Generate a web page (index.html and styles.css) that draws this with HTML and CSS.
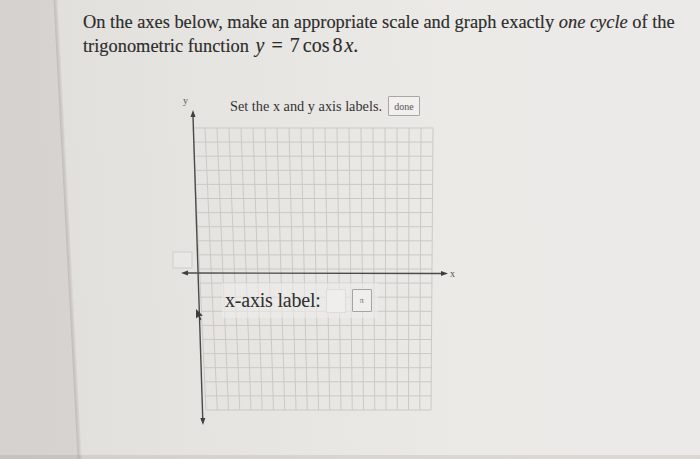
FILE: index.html
```html
<!DOCTYPE html>
<html lang="en">
<head>
<meta charset="utf-8">
<title>Graph one cycle</title>
<link rel="stylesheet" href="styles.css">
</head>
<body>
<main class="page">
  <p class="prompt">On the axes below, make an appropriate scale and graph exactly <em>one cycle</em> of the<br>trigonometric function <span class="math"><i>y</i><span class="op">=</span>7<span class="fn">cos</span>8<i>x</i>.</span></p>

  <div class="widget">
    <svg class="graph" width="300" height="340" viewBox="165 92 300 340" xmlns="http://www.w3.org/2000/svg">
      <g class="grid">
        <line x1="193" y1="128" x2="206" y2="410"/>
        <line x1="205" y1="128" x2="217.25" y2="410"/>
        <line x1="217" y1="128" x2="228.5" y2="410"/>
        <line x1="229" y1="128" x2="239.75" y2="410"/>
        <line x1="241" y1="128" x2="251" y2="410"/>
        <line x1="253" y1="128" x2="262.25" y2="410"/>
        <line x1="265" y1="128" x2="273.5" y2="410"/>
        <line x1="277" y1="128" x2="284.75" y2="410"/>
        <line x1="289" y1="128" x2="296" y2="410"/>
        <line x1="301" y1="128" x2="307.25" y2="410"/>
        <line x1="313" y1="128" x2="318.5" y2="410"/>
        <line x1="325" y1="128" x2="329.75" y2="410"/>
        <line x1="337" y1="128" x2="341" y2="410"/>
        <line x1="349" y1="128" x2="352.25" y2="410"/>
        <line x1="361" y1="128" x2="363.5" y2="410"/>
        <line x1="373" y1="128" x2="374.75" y2="410"/>
        <line x1="385" y1="128" x2="386" y2="410"/>
        <line x1="397" y1="128" x2="397.25" y2="410"/>
        <line x1="409" y1="128" x2="408.5" y2="410"/>
        <line x1="421" y1="128" x2="419.75" y2="410"/>
        <line x1="433" y1="128" x2="431" y2="410"/>
        <line x1="193" y1="128" x2="433" y2="128"/>
        <line x1="193.65" y1="142.1" x2="432.9" y2="142.1"/>
        <line x1="194.3" y1="156.2" x2="432.8" y2="156.2"/>
        <line x1="194.95" y1="170.3" x2="432.7" y2="170.3"/>
        <line x1="195.6" y1="184.4" x2="432.6" y2="184.4"/>
        <line x1="196.25" y1="198.5" x2="432.5" y2="198.5"/>
        <line x1="196.9" y1="212.6" x2="432.4" y2="212.6"/>
        <line x1="197.55" y1="226.7" x2="432.3" y2="226.7"/>
        <line x1="198.2" y1="240.8" x2="432.2" y2="240.8"/>
        <line x1="198.85" y1="254.9" x2="432.1" y2="254.9"/>
        <line x1="199.5" y1="269" x2="432" y2="269"/>
        <line x1="200.15" y1="283.1" x2="431.9" y2="283.1"/>
        <line x1="200.8" y1="297.2" x2="431.8" y2="297.2"/>
        <line x1="201.45" y1="311.3" x2="431.7" y2="311.3"/>
        <line x1="202.1" y1="325.4" x2="431.6" y2="325.4"/>
        <line x1="202.75" y1="339.5" x2="431.5" y2="339.5"/>
        <line x1="203.4" y1="353.6" x2="431.4" y2="353.6"/>
        <line x1="204.05" y1="367.7" x2="431.3" y2="367.7"/>
        <line x1="204.7" y1="381.8" x2="431.2" y2="381.8"/>
        <line x1="205.35" y1="395.9" x2="431.1" y2="395.9"/>
        <line x1="206" y1="410" x2="431" y2="410"/>
      </g>
      <rect class="ybox" x="173" y="252" width="19" height="16"/>
      <g class="axis">
        <line x1="193" y1="116" x2="202.8" y2="420"/>
        <line x1="187" y1="273" x2="443" y2="273.5"/>
      </g>
      <g class="arrow">
        <path d="M193 110 L190.5 117 L195.5 117 Z"/>
        <path d="M203 425 L200.3 418 L205.3 418 Z"/>
        <path d="M181 273 L188 270.5 L188 275.5 Z"/>
        <path d="M448 273.5 L441 271 L441 276 Z"/>
        <path class="cursor" d="M196 309 L196 318.5 L198.3 316.4 L200 320.3 L201.4 319.6 L199.8 315.9 L202.8 315.8 Z"/>
      </g>
      <text class="axlabel" x="183" y="104">y</text>
      <text class="axlabel" x="450" y="277">x</text>
    </svg>

    <div class="toolbar">
      <span class="hint">Set the x and y axis labels.</span>
      <button class="done" type="button">done</button>
    </div>

    <div class="label-pop">
      <span class="label-text">x-axis label:</span>
      <span class="label-input"></span>
      <button class="pi" type="button">π</button>
    </div>
  </div>
</main>
</body>
</html>
```

FILE: styles.css
```css
html, body {
  margin: 0;
  padding: 0;
}

body {
  width: 700px;
  height: 459px;
  overflow: hidden;
  font-family: "Liberation Serif", "Times New Roman", serif;
  color: #383838;
  background:
    linear-gradient(to bottom, rgba(0, 0, 0, 0) 455px, rgba(90, 85, 80, 0.12) 455px),
    linear-gradient(87deg, #d4d1ce 0, #d6d3d0 77px, #c2bfbc 78px, #cfccc9 80px, #e2e0dd 82px, #e6e4e1 210px, #ebeae7 480px, #eceae8 100%);
}

.page {
  display: flex;
  flex-direction: column;
  align-items: flex-start;
}

.prompt {
  margin: 10px 0 0 83px;
  font-size: 18.4px;
  line-height: 24px;
  color: #2c2c2c;
  -webkit-text-stroke: 0.15px #2c2c2c;
}

.prompt em {
  font-style: italic;
}

.math {
  font-family: "Liberation Serif", serif;
  font-size: 20px;
  line-height: 20px;
}

.math i {
  font-style: italic;
  margin-left: 2px;
}

.math .op {
  margin: 0 7px 0 7px;
}

.math .fn {
  margin: 0 3px 0 3px;
}

.widget {
  display: grid;
  margin: 34px 0 0 165px;
}

.widget > * {
  grid-area: 1 / 1;
}

.graph {
  display: block;
}

.grid line {
  stroke: #cbc9c6;
  stroke-width: 1;
}

.ybox {
  fill: #e9e8e6;
  stroke: #cfcdca;
  stroke-width: 1;
}

.axis line {
  stroke: #4a4a4a;
  stroke-width: 1.4;
}

.arrow path {
  fill: #3e3e3e;
}

.axlabel {
  font-family: "Liberation Serif", serif;
  font-size: 10px;
  fill: #555;
}

.toolbar {
  align-self: start;
  justify-self: start;
  margin: 4px 0 0 65px;
  display: flex;
  align-items: center;
  gap: 6px;
  height: 20px;
}

.hint {
  font-size: 14.3px;
  color: #333;
}

.done {
  width: 32px;
  height: 20px;
  padding: 0;
  margin: 0;
  border: 1px solid #a9a7a4;
  border-radius: 1px;
  background: #f1f0ee;
  font-family: "Liberation Serif", serif;
  font-size: 10px;
  color: #555;
}

.label-pop {
  align-self: start;
  justify-self: start;
  margin: 191px 0 0 57px;
  width: 156px;
  height: 35px;
  display: flex;
  align-items: center;
  padding-left: 3px;
  box-sizing: border-box;
  background: rgba(238, 237, 235, 0.6);
}

.label-text {
  font-size: 20px;
  color: #2f2f2f;
  letter-spacing: -0.2px;
}

.label-input {
  width: 18px;
  height: 22px;
  margin-left: 5px;
  border: 1px solid #dedcd9;
  background: #efeeec;
}

.pi {
  width: 20px;
  height: 23px;
  margin: 0 0 0 6px;
  padding: 0;
  border: 1px solid #a6a4a1;
  border-radius: 1px;
  background: #efeeec;
  font-family: "Liberation Serif", serif;
  font-size: 8px;
  color: #666;
}
```
